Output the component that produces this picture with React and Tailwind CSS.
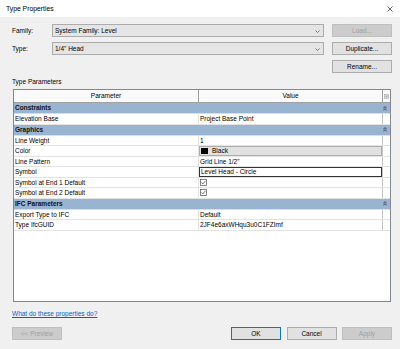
import React from 'react';

const rows = [
  { group: 'Constraints' },
  { name: 'Elevation Base', value: 'Project Base Point' },
  { group: 'Graphics' },
  { name: 'Line Weight', value: '1' },
  { name: 'Color', kind: 'color', value: 'Black' },
  { name: 'Line Pattern', value: 'Grid Line 1/2"' },
  { name: 'Symbol', kind: 'select', value: 'Level Head - Circle' },
  { name: 'Symbol at End 1 Default', kind: 'check' },
  { name: 'Symbol at End 2 Default', kind: 'check' },
  { group: 'IFC Parameters' },
  { name: 'Export Type to IFC', value: 'Default' },
  { name: 'Type IfcGUID', value: '2JF4e6axWHqu3u0C1FZImf' },
];

const btn = 'h-[12.5px] flex items-center justify-center border pt-[1px]';
const btnOn = 'bg-[#e1e1e1] border-[#adadad] text-black';
const btnOff = 'bg-[#cccccc] border-[#bfbfbf] text-[#a0a0a0]';

const Chevron = () => (
  <svg width="5" height="3" viewBox="0 0 5 3" className="absolute right-[3px] top-[5px]">
    <path d="M0.5 0.5 L2.5 2.5 L4.5 0.5" fill="none" stroke="#606060" strokeWidth="0.8" />
  </svg>
);

const Collapse = () => (
  <svg width="4" height="5" viewBox="0 0 4 5">
    <path d="M0.3 2.3 L2 0.6 L3.7 2.3 M0.3 4.4 L2 2.7 L3.7 4.4" fill="none" stroke="#1c2c4a" strokeWidth="0.8" />
  </svg>
);

const Check = () => (
  <svg width="7" height="7" viewBox="0 0 7 7" className="ml-[1px]">
    <rect x="0.5" y="0.5" width="6" height="6" fill="white" stroke="#505050" strokeWidth="0.7" />
    <path d="M1.6 3.4 L2.9 4.8 L5.4 1.9" fill="none" stroke="#303030" strokeWidth="0.7" />
  </svg>
);

const Combo = ({ label, value }) => (
  <div className="flex items-center h-[12.5px]">
    <span className="w-[40px] shrink-0 pt-[1px]">{label}</span>
    <div className="relative flex-1 h-full flex items-center pl-[2px] pt-[1px] bg-[#e5e5e5] border border-[#acacac]">
      {value}
      <Chevron />
    </div>
  </div>
);

const Value = ({ row }) => {
  if (row.kind === 'color') {
    return (
      <div className="h-full w-full flex items-center bg-[#e1e1e1] border border-[#adadad]">
        <span className="w-[7px] h-[6px] bg-black ml-[1px]" />
        <span className="ml-[4px] pt-[1px]">{row.value}</span>
      </div>
    );
  }
  if (row.kind === 'select') {
    return <div className="h-full w-full flex items-center pl-[1px] pt-[1px] bg-white border border-[#333]">{row.value}</div>;
  }
  if (row.kind === 'check') return <Check />;
  return <span className="pl-[1px] pt-[1px]">{row.value}</span>;
};

export default function App() {
  return (
    <div className="w-[400px] h-[349px] overflow-hidden flex flex-col bg-[#f0f0f0] text-black text-[6.5px] leading-none font-['Liberation_Sans',Arial,sans-serif]">
      <div className="h-[17px] shrink-0 bg-white flex items-center justify-between pl-[6px] pr-[7px]">
        <span className="text-[6.8px] pt-[1px]">Type Properties</span>
        <svg width="6" height="6" viewBox="0 0 6 6">
          <path d="M0.5 0.5 L5.5 5.5 M5.5 0.5 L0.5 5.5" stroke="#222" strokeWidth="0.7" />
        </svg>
      </div>

      <div className="flex-1 flex flex-col pl-[12px] pr-[8px]">
        <div className="flex gap-[8px] mt-[7px]">
          <div className="flex-1 flex flex-col gap-[5.5px]">
            <Combo label="Family:" value="System Family: Level" />
            <Combo label="Type:" value={'1/4" Head'} />
          </div>
          <div className="w-[60px] flex flex-col gap-[5.5px]">
            <div className={`${btn} ${btnOff}`}>Load...</div>
            <div className={`${btn} ${btnOn}`}>Duplicate...</div>
            <div className={`${btn} ${btnOn}`}>Rename...</div>
          </div>
        </div>

        <div className="mt-[5.5px] h-[8px] flex items-center pt-[1px]">Type Parameters</div>

        <div className="mt-[3px] ml-[1px] mr-[1px] h-[213px] flex flex-col bg-white border border-[#828790]">
          <div className="flex h-[13px] shrink-0 bg-[#fafafa] border-b border-[#a0a0a0]">
            <div className="w-[185px] shrink-0 flex items-center justify-center pt-[1px] border-r border-[#a0a0a0]">Parameter</div>
            <div className="flex-1 flex items-center justify-center pt-[1px] border-r border-[#a0a0a0]">Value</div>
            <div className="w-[7px] shrink-0 flex items-center justify-center">
              <svg width="5" height="5" viewBox="0 0 5 5">
                <rect x="0.5" y="0.5" width="4" height="4" fill="#ececec" stroke="#9a9a9a" strokeWidth="0.5" />
                <path d="M1.3 2 H3.7 M1.3 3 H3.7" stroke="#707070" strokeWidth="0.5" />
              </svg>
            </div>
          </div>

          {rows.map((row, i) =>
            row.group ? (
              <div key={i} className="flex h-[11px] shrink-0 items-center bg-[#99b4d1] border-b border-[#d6dfea]">
                <span className="flex-1 pl-[1px] pt-[1px] font-bold text-[#111]">{row.group}</span>
                <span className="w-[7px] shrink-0 flex items-center">
                  <Collapse />
                </span>
              </div>
            ) : (
              <div key={i} className="flex h-[10.5px] shrink-0 border-b border-[#e3e3e3]">
                <div className="w-[185px] shrink-0 flex items-center pl-[1px] pt-[1px] border-r border-[#e3e3e3]">{row.name}</div>
                <div className="flex-1 flex items-center border-r border-[#c4c4c4]">
                  <Value row={row} />
                </div>
                <div className="w-[7px] shrink-0" />
              </div>
            )
          )}
        </div>

        <div className="mt-[8px] h-[8px] flex items-center pt-[1px]">
          <span className="text-[#0066cc] underline">What do these properties do?</span>
        </div>

        <div className="mt-[9px] flex justify-between">
          <div className={`${btn} ${btnOff} w-[50px]`}>&lt;&lt; Preview</div>
          <div className="flex gap-[5.5px]">
            <div className={`${btn} w-[50px] bg-[#e1e1e1] border-[#0078d7]`}>OK</div>
            <div className={`${btn} ${btnOn} w-[50px]`}>Cancel</div>
            <div className={`${btn} ${btnOff} w-[50px]`}>Apply</div>
          </div>
        </div>
      </div>
    </div>
  );
}
